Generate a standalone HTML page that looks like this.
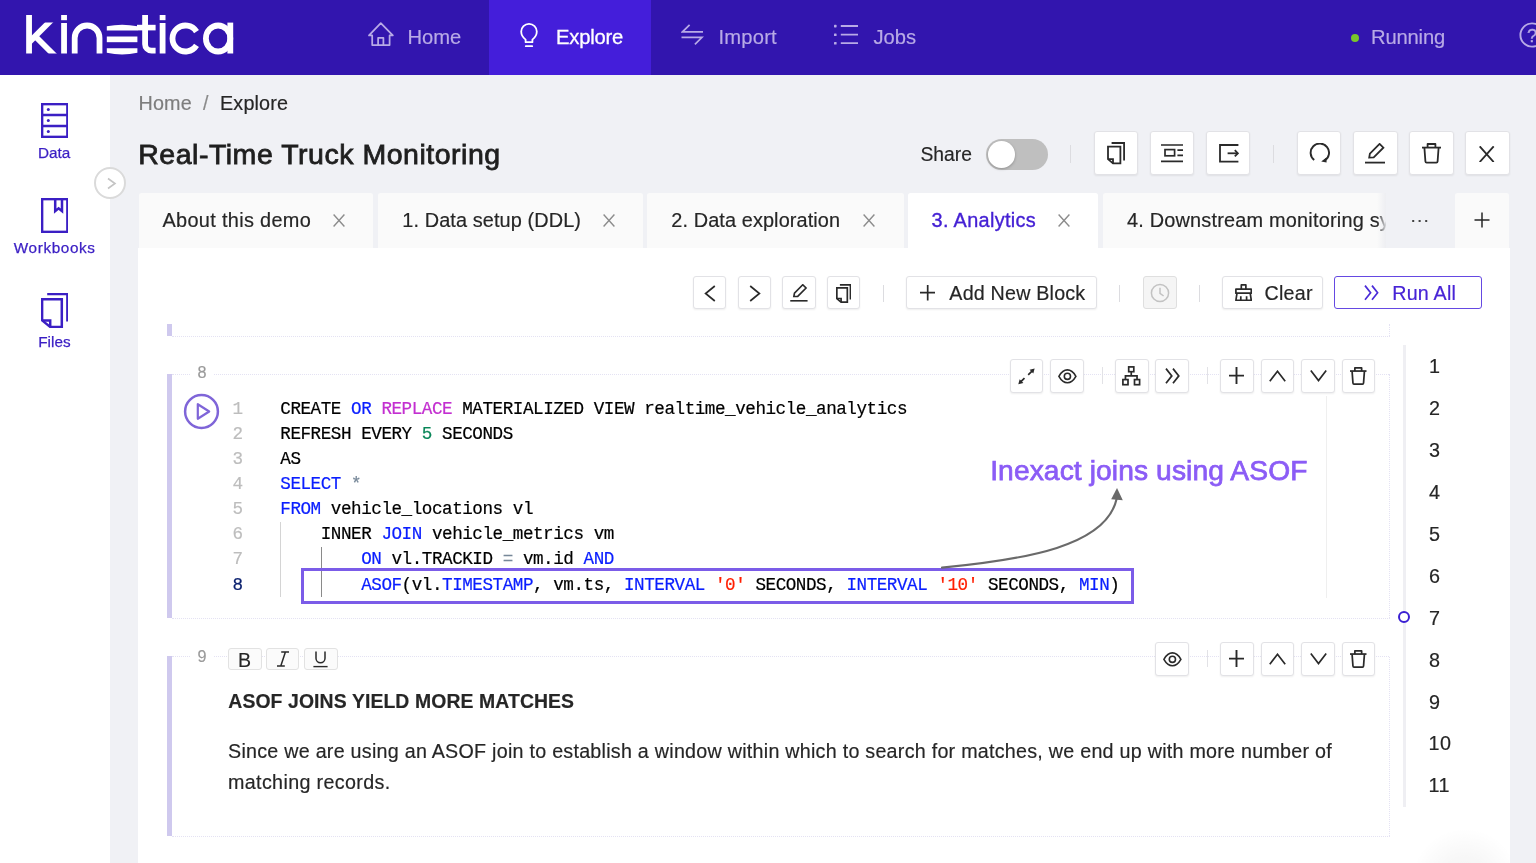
<!DOCTYPE html>
<html><head><meta charset="utf-8"><title>Kinetica Workbench</title>
<style>
*{box-sizing:border-box;margin:0;padding:0}
html,body{width:1536px;height:863px;overflow:hidden;background:#f0f1f5;font-family:"Liberation Sans",sans-serif;}
#root{position:absolute;left:0;top:0;width:1536px;height:863px;overflow:hidden;will-change:transform}
.b{position:absolute;display:block}
.t{position:absolute;white-space:nowrap;line-height:1;font-family:"Liberation Sans",sans-serif;-webkit-text-stroke:.18px}
.m{font-family:"Liberation Mono",monospace}
.btn{background:#fff;border:1px solid #e2e2e6;border-radius:3px;box-shadow:0 1px 2px rgba(0,0,0,.07)}
.code{position:absolute;left:280.3px;white-space:pre;font-family:"Liberation Mono",monospace;font-size:17.6px;letter-spacing:-0.450px;line-height:1;color:#000;-webkit-text-stroke:0.2px}
.ln{position:absolute;left:226px;width:17px;text-align:right;font-family:"Liberation Mono",monospace;font-size:17.6px;line-height:1;color:#bdbdbd;-webkit-text-stroke:0.2px}
.k{color:#0a1eff}.p{color:#c32fd0}.n{color:#098658}.s{color:#ff1e00}.o{color:#778899}

</style></head><body><div id="root">
<div class="b " style="left:138px;top:247.6px;width:1371.5px;height:616px;background:#fff"></div>
<div class="b " style="left:0px;top:0px;width:1536px;height:75px;background:#3215ae"></div>
<div class="b " style="left:489px;top:0px;width:162px;height:75px;background:#441eda"></div>
<svg class="b" style="left:0px;top:0px;" width="260" height="75" viewBox="0 0 260 75" fill="none">
<defs><clipPath id="kc"><rect x="30" y="22.6" width="40" height="30.9"/></clipPath></defs>
<g stroke="#fff" stroke-width="5.8" fill="none" stroke-linecap="butt" stroke-linejoin="miter">
<path d="M29.05 15V53.5"/>
<g clip-path="url(#kc)"><path d="M29 42.4L54 17.4"/><path d="M35.2 36.2L58 59.05"/></g>
<path d="M64.05 23V53.5"/>
<path d="M74.7 53.5V37.9a12.4 12.4 0 0 1 24.8 0V53.5"/>
<path d="M145.1 15V44.2a6.5 6.5 0 0 0 6.5 6.5H155.6"/>
<path d="M137 27.6H155.6" stroke-width="5.6"/>
<path d="M162.6 23V53.5"/>
<path d="M196.5 31.6A13 13 0 1 0 196.5 45.4"/>
<ellipse cx="218.1" cy="38.5" rx="12.2" ry="13"/>
<path d="M230.3 22.6V53.5"/>
</g>
<g fill="#fff">
<rect x="61.15" y="15" width="5.8" height="5.2"/>
<rect x="159.7" y="15" width="5.8" height="5.2"/>
<path d="M106.8 30.5V26.3Q122.1 23.3 137.4 26.3V30.5z"/>
<path d="M106.8 36.5H137.4V42.2H106.8z"/>
<path d="M106.8 48.2H137.4V52.8Q122.1 56 106.8 52.8z"/>
</g></svg>
<svg class="b" style="left:368px;top:22px;" width="26" height="25" viewBox="0 0 26 25" fill="none"><g stroke="#b8aae6" stroke-width="1.75" fill="none" stroke-linejoin="round" stroke-linecap="round"><path d="M4.2 13.4H1L12.8 1.1L24.8 13.4H21.6V23.1H4.2z"/><path d="M10.1 23V15.8H15.4V23"/></g></svg>
<div class="t " style="left:407.5px;top:27.40px;font-size:20.2px;color:#b8aae6;font-weight:400;">Home</div>
<svg class="b" style="left:520px;top:21.5px;" width="18" height="26" viewBox="0 0 18 26" fill="none"><g stroke="#fff" stroke-width="1.8" fill="none" stroke-linecap="round" stroke-linejoin="round"><path d="M5.6 17.6C3 15.6 1.2 13 1.2 9.6a7.8 7.8 0 0 1 15.6 0c0 3.4-1.8 6-4.4 8v2.6H5.6z"/><path d="M5.8 24.2H12.2"/></g></svg>
<div class="t " style="left:556px;top:27.40px;font-size:20.2px;color:#fff;font-weight:400;-webkit-text-stroke:0.3px #fff;letter-spacing:-.2px">Explore</div>
<svg class="b" style="left:681px;top:24px;" width="23" height="22" viewBox="0 0 23 22" fill="none"><g stroke="#b8aae6" stroke-width="1.7" fill="none" stroke-linecap="butt" stroke-linejoin="miter"><path d="M22 7.8H1.5L8.6 0.8"/><path d="M0.5 13.4H21L13.9 20.4"/></g></svg>
<div class="t " style="left:718.5px;top:27.40px;font-size:20.2px;color:#b8aae6;font-weight:400;letter-spacing:.2px">Import</div>
<svg class="b" style="left:834px;top:24px;" width="25" height="22" viewBox="0 0 25 22" fill="none"><g stroke="#b8aae6" stroke-width="1.8" fill="none"><path d="M6.8 2H24M6.8 10.6H24M6.8 19.2H24"/></g><g fill="#b8aae6"><rect x="0" y="0.8" width="2.6" height="2.6" rx=".6"/><rect x="0" y="9.4" width="2.6" height="2.6" rx=".6"/><rect x="0" y="18" width="2.6" height="2.6" rx=".6"/></g></svg>
<div class="t " style="left:873.5px;top:27.40px;font-size:20.2px;color:#b8aae6;font-weight:400;">Jobs</div>
<div class="b " style="left:1351px;top:33.5px;width:8px;height:8px;background:#79c52b;border-radius:50%"></div>
<div class="t " style="left:1371px;top:27.20px;font-size:20.2px;color:#b8aae6;font-weight:400;letter-spacing:-.17px">Running</div>
<svg class="b" style="left:1518px;top:20.5px;" width="28" height="28" viewBox="0 0 28 28" fill="none"><circle cx="14" cy="14" r="11.6" stroke="#b8aae6" stroke-width="1.9"/></svg>
<div class="t " style="left:1527px;top:26.50px;font-size:18.5px;color:#b8aae6;font-weight:400;-webkit-text-stroke:.3px">?</div>
<div class="b " style="left:0px;top:75px;width:110px;height:788px;background:#fff"></div>
<svg class="b" style="left:40.5px;top:103.3px;" width="27.5" height="35" viewBox="0 0 27.5 35" fill="none"><g stroke="#3b1fc4" stroke-width="2.5" fill="none"><rect x="1.1" y="1.1" width="25.3" height="32.8"/><path d="M1 12H26.5M1 23H26.5"/></g><g fill="#3b1fc4"><circle cx="7.3" cy="6.6" r="1.5"/><circle cx="7.3" cy="17.5" r="1.5"/><circle cx="7.3" cy="28.4" r="1.5"/></g></svg>
<div class="t " style="left:38px;top:145.40px;font-size:15.3px;color:#3b1fc4;font-weight:400;-webkit-text-stroke:0.25px;letter-spacing:.02px">Data</div>
<svg class="b" style="left:40.5px;top:198.3px;" width="27.5" height="35" viewBox="0 0 27.5 35" fill="none"><g stroke="#3b1fc4" stroke-width="2.5" fill="none" stroke-linejoin="miter"><rect x="1.1" y="1.1" width="25.3" height="32.8"/><path d="M14.2 1V13.2L17.6 10.4L21 13.2V1"/></g></svg>
<div class="t " style="left:13.8px;top:240.40px;font-size:15.3px;color:#3b1fc4;font-weight:400;-webkit-text-stroke:0.25px;letter-spacing:.62px">Workbooks</div>
<svg class="b" style="left:40.5px;top:293px;" width="27.5" height="35" viewBox="0 0 27.5 35" fill="none"><g stroke="#3b1fc4" stroke-width="2.5" fill="none" stroke-linejoin="miter"><path d="M6.2 1.1H26.4V28.6"/><path d="M1.1 6.3H20.8V33.9H9.2L1.1 27.4z"/><path d="M1.1 27.4H9.2V33.9"/></g></svg>
<div class="t " style="left:38.2px;top:334.30px;font-size:15.3px;color:#3b1fc4;font-weight:400;-webkit-text-stroke:0.25px;letter-spacing:.02px">Files</div>
<div class="b " style="left:94.1px;top:166.9px;width:31.9px;height:31.9px;background:#fff;border:2.2px solid #dadada;border-radius:50%"></div>
<svg class="b" style="left:105.5px;top:176.5px;" width="11" height="13" viewBox="0 0 11 13" fill="none"><path d="M2 1.5L9 6.5L2 11.5" stroke="#c4c4c4" stroke-width="1.6" fill="none"/></svg>
<div class="t " style="left:138.5px;top:94.00px;font-size:19.8px;color:#7d7d7d;font-weight:400;letter-spacing:.15px">Home</div>
<div class="t " style="left:203px;top:94.00px;font-size:19.6px;color:#8a8a8a;font-weight:400;">/</div>
<div class="t " style="left:220px;top:94.00px;font-size:19.8px;color:#262626;font-weight:400;letter-spacing:.15px">Explore</div>
<div class="t " style="left:138.2px;top:140.00px;font-size:28.5px;color:#1f1f1f;font-weight:400;-webkit-text-stroke:0.8px;letter-spacing:.52px">Real-Time Truck Monitoring</div>
<div class="t " style="left:920.5px;top:145.20px;font-size:19.3px;color:#262626;font-weight:400;">Share</div>
<div class="b " style="left:986px;top:139px;width:62px;height:31px;background:#bfbfbf;border-radius:16px"></div>
<div class="b " style="left:988.2px;top:141.2px;width:26.6px;height:26.6px;background:#fff;border-radius:50%;box-shadow:0 1px 3px rgba(0,0,0,.25)"></div>
<div class="b " style="left:1070.3px;top:145px;width:1.2px;height:18px;background:#dcdce0"></div>
<div class="b " style="left:1273px;top:145px;width:1.2px;height:18px;background:#dcdce0"></div>
<div class="b btn" style="left:1093.8px;top:131.2px;width:44.3px;height:44.3px;"></div>
<div class="b btn" style="left:1150px;top:131.2px;width:44.3px;height:44.3px;"></div>
<div class="b btn" style="left:1206px;top:131.2px;width:44.3px;height:44.3px;"></div>
<div class="b btn" style="left:1297.2px;top:131.2px;width:44.3px;height:44.3px;"></div>
<div class="b btn" style="left:1353.4px;top:131.2px;width:44.3px;height:44.3px;"></div>
<div class="b btn" style="left:1409.4px;top:131.2px;width:44.3px;height:44.3px;"></div>
<div class="b btn" style="left:1465.4px;top:131.2px;width:44.3px;height:44.3px;"></div>
<svg class="b" style="left:1107px;top:142.4px;" width="18.2" height="22.5" viewBox="0 0 18.2 22.5" fill="none"><g stroke="#2a2a2a" stroke-width="1.8" fill="none" stroke-linejoin="miter"><path d="M4.6 1H17.1V18.4"/><path d="M1 4.6H13.4V21.4H6L1 17.2z"/><path d="M1 17.2H6V21.4"/></g></svg>
<svg class="b" style="left:1160.6px;top:144.2px;" width="22.5" height="18.5" viewBox="0 0 22.5 18.5" fill="none"><g stroke="#2a2a2a" stroke-width="1.7" fill="none"><path d="M0 1H22.4M0 17.4H22.4M16.4 6.2H22.4M16.4 11.4H22.4"/><rect x="4" y="5.6" width="9.6" height="6.2"/></g></svg>
<svg class="b" style="left:1218.6px;top:144px;" width="20.5" height="18.8" viewBox="0 0 20.5 18.8" fill="none"><g stroke="#2a2a2a" stroke-width="1.8" fill="none" stroke-linejoin="miter"><path d="M19.4 1H1V17.6H19.4"/><path d="M8.6 9.3H18.6"/><path d="M15.8 6.2L18.9 9.3L15.8 12.4" /></g></svg>
<svg class="b" style="left:1309px;top:143.2px;" width="21" height="21" viewBox="0 0 21 21" fill="none"><g stroke="#2a2a2a" stroke-width="1.9" fill="none" stroke-linecap="butt"><path d="M5.2 17.0A9.2 9.2 0 1 1 15.6 17.6"/></g><path d="M12.2 18.6L17.4 14.4L17.6 19.4z" fill="#2a2a2a"/></svg>
<svg class="b" style="left:1365px;top:143px;" width="20.4" height="21" viewBox="0 0 20.4 21" fill="none"><g stroke="#2a2a2a" stroke-width="1.8" fill="none" stroke-linejoin="miter"><path d="M0 19.6H20.2"/><path d="M4.2 14.6L4.9 10.6L14.6 0.9L18.4 4.7L8.7 14.4z"/></g></svg>
<svg class="b" style="left:1421.7px;top:143.2px;" width="19" height="20.6" viewBox="0 0 19 20.6" fill="none"><g stroke="#2a2a2a" stroke-width="1.8" fill="none" stroke-linejoin="round"><path d="M0 4.6H19"/><path d="M5.6 4.4V1H13.4V4.4"/><path d="M2.4 4.8L3.4 18.4Q3.5 19.6 4.6 19.6H14.4Q15.5 19.6 15.6 18.4L16.6 4.8"/></g></svg>
<svg class="b" style="left:1479.4px;top:145.5px;" width="15.4" height="16.4" viewBox="0 0 15.4 16.4" fill="none"><path d="M0.7 0.3L14.7 16.1M14.7 0.3L0.7 16.1" stroke="#2a2a2a" stroke-width="1.8"/></svg>
<div class="b " style="left:138.5px;top:192.6px;width:234.5px;height:55px;background:#fafafa;border-radius:2.5px 2.5px 0 0"></div>
<div class="t " style="left:162.5px;top:211.20px;font-size:19.9px;color:#262626;font-weight:400;letter-spacing:0.32px">About this demo</div>
<svg class="b" style="left:332.5px;top:214.4px;" width="12" height="13" viewBox="0 0 12 13" fill="none"><path d="M0.6 0.5L11.4 12.5M11.4 0.5L0.6 12.5" stroke="#8c8c8c" stroke-width="1.4"/></svg>
<div class="b " style="left:377.5px;top:192.6px;width:265.5px;height:55px;background:#fafafa;border-radius:2.5px 2.5px 0 0"></div>
<div class="t " style="left:402.3px;top:211.20px;font-size:19.9px;color:#262626;font-weight:400;letter-spacing:0.1px">1. Data setup (DDL)</div>
<svg class="b" style="left:602.5px;top:214.4px;" width="12" height="13" viewBox="0 0 12 13" fill="none"><path d="M0.6 0.5L11.4 12.5M11.4 0.5L0.6 12.5" stroke="#8c8c8c" stroke-width="1.4"/></svg>
<div class="b " style="left:647.3px;top:192.6px;width:256.5px;height:55px;background:#fafafa;border-radius:2.5px 2.5px 0 0"></div>
<div class="t " style="left:671.3px;top:211.20px;font-size:19.9px;color:#262626;font-weight:400;letter-spacing:0.1px">2. Data exploration</div>
<svg class="b" style="left:863.4px;top:214.4px;" width="12" height="13" viewBox="0 0 12 13" fill="none"><path d="M0.6 0.5L11.4 12.5M11.4 0.5L0.6 12.5" stroke="#8c8c8c" stroke-width="1.4"/></svg>
<div class="b " style="left:908.2px;top:192.6px;width:190.3px;height:55px;background:#fff;border-radius:2.5px 2.5px 0 0"></div>
<div class="t " style="left:931.6px;top:211.20px;font-size:19.9px;color:#4420d4;font-weight:400;-webkit-text-stroke:0.35px;letter-spacing:0.32px">3. Analytics</div>
<svg class="b" style="left:1058px;top:214.4px;" width="12" height="13" viewBox="0 0 12 13" fill="none"><path d="M0.6 0.5L11.4 12.5M11.4 0.5L0.6 12.5" stroke="#8c8c8c" stroke-width="1.4"/></svg>
<div class="b " style="left:1102.8px;top:192.6px;width:283.2px;height:55px;background:#fafafa;border-radius:2.5px 0 0 0;overflow:hidden"><div class="t" style="left:24.2px;top:18.40px;font-size:19.9px;color:#262626;letter-spacing:.2px">4. Downstream monitoring system</div><div class="b" style="right:0;top:0;width:9px;height:55px;background:linear-gradient(90deg,rgba(240,241,245,0),rgba(236,237,241,.9))"></div></div>
<div class="t " style="left:1410px;top:210.00px;font-size:19px;color:#444;font-weight:400;letter-spacing:.2px">&#183;&#183;&#183;</div>
<div class="b " style="left:1454.6px;top:192.6px;width:54.9px;height:55px;background:#fafafa;border-radius:2.5px 2.5px 0 0"></div>
<svg class="b" style="left:1473.5px;top:212px;" width="16" height="16" viewBox="0 0 16 16" fill="none"><path d="M8 0.5V15.5M0.5 8H15.5" stroke="#262626" stroke-width="1.5"/></svg>
<div class="b btn" style="left:693.2px;top:276.3px;width:33.2px;height:33.2px;"></div>
<div class="b btn" style="left:737.7px;top:276.3px;width:33.2px;height:33.2px;"></div>
<div class="b btn" style="left:782.4px;top:276.3px;width:33.2px;height:33.2px;"></div>
<div class="b btn" style="left:827.2px;top:276.3px;width:33.2px;height:33.2px;"></div>
<svg class="b" style="left:703.5px;top:284.5px;" width="12" height="17" viewBox="0 0 12 17" fill="none"><path d="M10.8 1L1.6 8.5L10.8 16" stroke="#2a2a2a" stroke-width="1.7" fill="none"/></svg>
<svg class="b" style="left:748.5px;top:284.5px;" width="12" height="17" viewBox="0 0 12 17" fill="none"><path d="M1.2 1L10.4 8.5L1.2 16" stroke="#2a2a2a" stroke-width="1.7" fill="none"/></svg>
<svg class="b" style="left:790px;top:284.4px;" width="18" height="18" viewBox="0 0 20.4 21" fill="none"><g stroke="#2a2a2a" stroke-width="1.9" fill="none" stroke-linejoin="miter"><path d="M0 19.6H20.2"/><path d="M4.2 14.6L4.9 10.6L14.6 0.9L18.4 4.7L8.7 14.4z"/></g></svg>
<svg class="b" style="left:835.9px;top:283.6px;" width="15.4" height="19" viewBox="0 0 18.2 22.5" fill="none"><g stroke="#2a2a2a" stroke-width="2.0" fill="none" stroke-linejoin="miter"><path d="M4.6 1H17.1V18.4"/><path d="M1 4.6H13.4V21.4H6L1 17.2z"/><path d="M1 17.2H6V21.4"/></g></svg>
<div class="b " style="left:883.3px;top:285px;width:1.2px;height:17px;background:#dcdce0"></div>
<div class="b " style="left:1119px;top:285px;width:1.2px;height:17px;background:#dcdce0"></div>
<div class="b " style="left:1199.2px;top:285px;width:1.2px;height:17px;background:#dcdce0"></div>
<div class="b btn" style="left:906.3px;top:276.3px;width:190.3px;height:33.2px;"></div>
<svg class="b" style="left:920px;top:285.2px;" width="15.4" height="15.4" viewBox="0 0 15.4 15.4" fill="none"><path d="M7.7 0V15.4M0 7.7H15.4" stroke="#2a2a2a" stroke-width="1.7"/></svg>
<div class="t " style="left:949.3px;top:284.00px;font-size:19.7px;color:#262626;font-weight:400;letter-spacing:.2px">Add New Block</div>
<div class="b " style="left:1142.8px;top:276.3px;width:34px;height:33.2px;background:#f5f5f5;border:1px solid #dfdfdf;border-radius:3px"></div>
<svg class="b" style="left:1150px;top:283px;" width="20" height="20" viewBox="0 0 20 20" fill="none"><circle cx="10" cy="10" r="8.6" stroke="#c2c2c2" stroke-width="1.5"/><path d="M10 4.8V10.4L13.6 13" stroke="#c2c2c2" stroke-width="1.5" fill="none"/></svg>
<div class="b btn" style="left:1222.3px;top:276.3px;width:100.6px;height:33.2px;"></div>
<svg class="b" style="left:1234.9px;top:283.9px;" width="17.2" height="17.2" viewBox="0 0 17.2 17.2" fill="none"><g stroke="#2a2a2a" stroke-width="1.7" fill="none" stroke-linejoin="round"><path d="M6.3 5.2V0.9H10.9V5.2"/><rect x="0.9" y="5.2" width="15.4" height="4"/><path d="M2 9.2L0.9 16.3H16.3L15.2 9.2"/><path d="M5.8 16.3V12.3M11.6 16.3V12.3"/></g></svg>
<div class="t " style="left:1264.6px;top:284.00px;font-size:19.7px;color:#262626;font-weight:400;letter-spacing:.2px">Clear</div>
<div class="b " style="left:1334px;top:276.3px;width:147.8px;height:33.2px;background:#fff;border:1.6px solid #6549e2;border-radius:3px"></div>
<svg class="b" style="left:1364.4px;top:285.2px;" width="15" height="15.4" viewBox="0 0 15 15.4" fill="none"><path d="M1 0.6L6.6 7.7L1 14.8M8 0.6L13.6 7.7L8 14.8" stroke="#4a2bd8" stroke-width="1.7" fill="none"/></svg>
<div class="t " style="left:1392.3px;top:284.00px;font-size:19.7px;color:#4724d6;font-weight:400;letter-spacing:.2px;-webkit-text-stroke:.2px">Run All</div>
<div class="b " style="left:166.5px;top:324px;width:5.7px;height:12px;background:#cfc9ee"></div>
<div class="b " style="left:172px;top:335.6px;width:1217.5px;height:1px;border-top:1px dotted #e4e2f3"></div>
<div class="b " style="left:1389px;top:324px;width:1px;height:12px;border-left:1px dotted #e4e2f3"></div>
<div class="b " style="left:166.5px;top:373.8px;width:5.7px;height:244px;background:#cfc9ee"></div>
<div class="b " style="left:172px;top:373.6px;width:18px;height:1px;border-top:1px dotted #e4e2f3"></div>
<div class="b " style="left:214px;top:373.6px;width:1175px;height:1px;border-top:1px dotted #e4e2f3"></div>
<div class="b " style="left:1389px;top:374px;width:1px;height:244px;border-left:1px dotted #e4e2f3"></div>
<div class="b " style="left:172px;top:617.5px;width:1217.5px;height:1px;border-top:1px dotted #e4e2f3"></div>
<div class="t " style="left:197.6px;top:364.30px;font-size:16.2px;color:#9a9a9a;font-weight:400;">8</div>
<div class="b " style="left:1326px;top:396px;width:1px;height:202px;background:#efefef"></div>
<svg class="b" style="left:183.1px;top:392.6px;" width="37" height="37" viewBox="0 0 37 37" fill="none"><circle cx="18.5" cy="18.5" r="16.4" stroke="#7f65d8" stroke-width="2.5" fill="#fff"/><path d="M14.8 11.2V25.8L26.2 18.5z" stroke="#7f65d8" stroke-width="2.2" fill="none" stroke-linejoin="round"/></svg>
<div class="b btn" style="left:1009.5px;top:359.29999999999995px;width:33.6px;height:33.5px;"></div>
<div class="b btn" style="left:1050.2px;top:359.29999999999995px;width:33.6px;height:33.5px;"></div>
<div class="b btn" style="left:1115.2px;top:359.29999999999995px;width:33.6px;height:33.5px;"></div>
<div class="b btn" style="left:1155.3999999999999px;top:359.29999999999995px;width:33.6px;height:33.5px;"></div>
<div class="b btn" style="left:1220.1px;top:359.29999999999995px;width:33.6px;height:33.5px;"></div>
<div class="b btn" style="left:1260.8px;top:359.29999999999995px;width:33.6px;height:33.5px;"></div>
<div class="b btn" style="left:1301.0px;top:359.29999999999995px;width:33.6px;height:33.5px;"></div>
<div class="b btn" style="left:1341.6px;top:359.29999999999995px;width:33.6px;height:33.5px;"></div>
<div class="b " style="left:1207.2px;top:366.9px;width:1.2px;height:17px;background:#e2e2e6"></div>
<div class="b " style="left:1101.8px;top:366.9px;width:1.2px;height:17px;background:#e2e2e6"></div>
<svg class="b" style="left:1018.3px;top:368.0px;" width="17" height="17" viewBox="0 0 17 17" fill="none"><path d="M10.2 6.8L14.5 2.6M6.5 10.1L2.4 14.2" stroke="#2a2a2a" stroke-width="1.7"/><path d="M16.65 0.4L11.6 1.7L15.3 5.4z M0.3 16.3L5.4 15L1.65 11.3z" fill="#2a2a2a"/></svg>
<svg class="b" style="left:1122.4px;top:366.3px;" width="18.5" height="19.6" viewBox="0 0 18.5 19.6" fill="none"><g stroke="#2a2a2a" stroke-width="1.7" fill="none"><rect x="6.7" y="0.9" width="5.1" height="4.8"/><rect x="0.9" y="13.6" width="5.1" height="5.1"/><rect x="12.5" y="13.6" width="5.1" height="5.1"/><path d="M9.25 5.7V9.8M3.45 13.6V9.8H15.05V13.6"/></g></svg>
<svg class="b" style="left:1165px;top:368.1px;" width="15" height="15.8" viewBox="0 0 15 15.8" fill="none"><path d="M1 0.6L6.8 7.9L1 15.2M8 0.6L13.8 7.9L8 15.2" stroke="#2a2a2a" stroke-width="1.7" fill="none"/></svg>
<svg class="b" style="left:1057.8000000000002px;top:369.0px;" width="18.8" height="14.6" viewBox="0 0 18.8 14.6" fill="none"><g stroke="#2a2a2a" stroke-width="1.6" fill="none"><path d="M0.9 7.3C3.4 2.9 6.2 0.9 9.4 0.9S15.4 2.9 17.9 7.3C15.4 11.7 12.6 13.7 9.4 13.7S3.4 11.7 0.9 7.3z"/><circle cx="9.4" cy="7.3" r="3.1"/></g></svg>
<svg class="b" style="left:1229.3px;top:367.1px;" width="15" height="17.2" viewBox="0 0 15 17.2" fill="none"><path d="M7.5 0V17.2M0 8.6H15" stroke="#2a2a2a" stroke-width="1.9"/></svg>
<svg class="b" style="left:1268.8px;top:370.1px;" width="17" height="11.8" viewBox="0 0 17 11.8" fill="none"><path d="M0.8 11.2L8.5 1.3L16.2 11.2" stroke="#2a2a2a" stroke-width="1.7" fill="none"/></svg>
<svg class="b" style="left:1309.8px;top:369.9px;" width="17" height="11.8" viewBox="0 0 17 11.8" fill="none"><path d="M0.8 0.6L8.5 10.5L16.2 0.6" stroke="#2a2a2a" stroke-width="1.7" fill="none"/></svg>
<svg class="b" style="left:1350.3px;top:366.7px;" width="16.5" height="18" viewBox="0 0 19 20.6" fill="none"><g stroke="#2a2a2a" stroke-width="2.0" fill="none" stroke-linejoin="round"><path d="M0 4.6H19"/><path d="M5.6 4.4V1H13.4V4.4"/><path d="M2.4 4.8L3.4 18.4Q3.5 19.6 4.6 19.6H14.4Q15.5 19.6 15.6 18.4L16.6 4.8"/></g></svg>
<div class="code" style="top:400.60px">CREATE <span class="k">OR</span> <span class="p">REPLACE</span> MATERIALIZED VIEW realtime_vehicle_analytics</div>
<div class="ln" style="top:400.60px;">1</div>
<div class="code" style="top:425.73px">REFRESH EVERY <span class="n">5</span> SECONDS</div>
<div class="ln" style="top:425.73px;">2</div>
<div class="code" style="top:450.86px">AS</div>
<div class="ln" style="top:450.86px;">3</div>
<div class="code" style="top:475.99px"><span class="k">SELECT</span> <span class="o">*</span></div>
<div class="ln" style="top:475.99px;">4</div>
<div class="code" style="top:501.12px"><span class="k">FROM</span> vehicle_locations vl</div>
<div class="ln" style="top:501.12px;">5</div>
<div class="code" style="top:526.25px">    INNER <span class="k">JOIN</span> vehicle_metrics vm</div>
<div class="ln" style="top:526.25px;">6</div>
<div class="code" style="top:551.38px">        <span class="k">ON</span> vl.TRACKID <span class="o">=</span> vm.id <span class="k">AND</span></div>
<div class="ln" style="top:551.38px;">7</div>
<div class="code" style="top:576.51px">        <span class="k">ASOF</span>(vl.<span class="k">TIMESTAMP</span>, vm.ts, <span class="k">INTERVAL</span> <span class="s">'0'</span> SECONDS, <span class="k">INTERVAL</span> <span class="s">'10'</span> SECONDS, <span class="k">MIN</span>)</div>
<div class="ln" style="top:576.51px;color:#0b216f;">8</div>
<div class="b " style="left:280.4px;top:521.5px;width:1px;height:75.5px;background:#d4d4d4"></div>
<div class="b " style="left:321.1px;top:546.8px;width:1px;height:50.2px;background:#8a8a8a"></div>
<div class="b " style="left:300.8px;top:568.1px;width:832.8px;height:36.3px;border:3.1px solid #7b5ce8"></div>
<div class="t " style="left:990.2px;top:455.80px;font-size:28.2px;color:#8b5cf6;font-weight:400;-webkit-text-stroke:0.75px #8b5cf6;letter-spacing:.1px">Inexact joins using ASOF</div>
<svg class="b" style="left:930px;top:480px;" width="210" height="95" viewBox="0 0 210 95" fill="none"><path d="M12 87.6C96 79.5 176 66 186.6 19" stroke="#6a6a6a" stroke-width="2.1" fill="none" stroke-linecap="round"/><path d="M187 8L192.8 20.2L181.2 19.2z" fill="#6a6a6a"/></svg>
<div class="b " style="left:1403.1px;top:344.6px;width:2.9px;height:462px;background:#efeff3"></div>
<div class="t " style="left:1429.0px;top:356.90px;font-size:19.8px;color:#262626;font-weight:400;letter-spacing:.3px">1</div>
<div class="t " style="left:1429.0px;top:398.85px;font-size:19.8px;color:#262626;font-weight:400;letter-spacing:.3px">2</div>
<div class="t " style="left:1429.0px;top:440.80px;font-size:19.8px;color:#262626;font-weight:400;letter-spacing:.3px">3</div>
<div class="t " style="left:1429.0px;top:482.75px;font-size:19.8px;color:#262626;font-weight:400;letter-spacing:.3px">4</div>
<div class="t " style="left:1429.0px;top:524.70px;font-size:19.8px;color:#262626;font-weight:400;letter-spacing:.3px">5</div>
<div class="t " style="left:1429.0px;top:566.65px;font-size:19.8px;color:#262626;font-weight:400;letter-spacing:.3px">6</div>
<div class="t " style="left:1429.0px;top:608.60px;font-size:19.8px;color:#262626;font-weight:400;letter-spacing:.3px">7</div>
<div class="t " style="left:1429.0px;top:650.55px;font-size:19.8px;color:#262626;font-weight:400;letter-spacing:.3px">8</div>
<div class="t " style="left:1429.0px;top:692.50px;font-size:19.8px;color:#262626;font-weight:400;letter-spacing:.3px">9</div>
<div class="t " style="left:1428.6px;top:734.45px;font-size:19.8px;color:#262626;font-weight:400;letter-spacing:.3px">10</div>
<div class="t " style="left:1428.6px;top:776.40px;font-size:19.8px;color:#262626;font-weight:400;letter-spacing:.3px">11</div>
<div class="b " style="left:1398.2px;top:611.1px;width:12.3px;height:12.3px;background:#fff;border:2.7px solid #3a1fd2;border-radius:50%"></div>
<div class="b " style="left:166.5px;top:656px;width:5.7px;height:180px;background:#cfc9ee"></div>
<div class="b " style="left:172px;top:656.4px;width:18px;height:1px;border-top:1px dotted #e4e2f3"></div>
<div class="b " style="left:214px;top:656.4px;width:1175px;height:1px;border-top:1px dotted #e4e2f3"></div>
<div class="b " style="left:1389px;top:657px;width:1px;height:179px;border-left:1px dotted #e4e2f3"></div>
<div class="b " style="left:172px;top:835.5px;width:1217.5px;height:1px;border-top:1px dotted #e4e2f3"></div>
<div class="t " style="left:197.6px;top:647.60px;font-size:16.2px;color:#9a9a9a;font-weight:400;">9</div>
<div class="b " style="left:228.3px;top:648.3px;width:33.3px;height:21.4px;background:#fbfbfb;border:1px solid #e2e2e2;border-radius:3px"></div>
<div class="b " style="left:265.6px;top:648.3px;width:33.3px;height:21.4px;background:#fbfbfb;border:1px solid #e2e2e2;border-radius:3px"></div>
<div class="b " style="left:304.2px;top:648.3px;width:33.4px;height:21.4px;background:#fbfbfb;border:1px solid #e2e2e2;border-radius:3px"></div>
<div class="t " style="left:238px;top:650.60px;font-size:19.6px;color:#262626;font-weight:400;-webkit-text-stroke:.15px">B</div>
<svg class="b" style="left:275.6px;top:651.2px;" width="14" height="16" viewBox="0 0 14 16" fill="none"><path d="M5.2 1H13M1 15H8.8M9.4 1L4.8 15" stroke="#2a2a2a" stroke-width="1.5" fill="none"/></svg>
<svg class="b" style="left:313.2px;top:651px;" width="15" height="17" viewBox="0 0 15 17" fill="none"><path d="M3 0.4V7.2a4.5 4.5 0 0 0 9 0V0.4" stroke="#2a2a2a" stroke-width="1.5" fill="none"/><path d="M0.4 15.6H14.6" stroke="#2a2a2a" stroke-width="1.4"/></svg>
<div class="b btn" style="left:1155.3999999999999px;top:642.3px;width:33.6px;height:33.5px;"></div>
<div class="b btn" style="left:1220.1px;top:642.3px;width:33.6px;height:33.5px;"></div>
<div class="b btn" style="left:1260.8px;top:642.3px;width:33.6px;height:33.5px;"></div>
<div class="b btn" style="left:1301.0px;top:642.3px;width:33.6px;height:33.5px;"></div>
<div class="b btn" style="left:1341.6px;top:642.3px;width:33.6px;height:33.5px;"></div>
<div class="b " style="left:1207.2px;top:649.9px;width:1.2px;height:17px;background:#e2e2e6"></div>
<svg class="b" style="left:1163.0px;top:652.0px;" width="18.8" height="14.6" viewBox="0 0 18.8 14.6" fill="none"><g stroke="#2a2a2a" stroke-width="1.6" fill="none"><path d="M0.9 7.3C3.4 2.9 6.2 0.9 9.4 0.9S15.4 2.9 17.9 7.3C15.4 11.7 12.6 13.7 9.4 13.7S3.4 11.7 0.9 7.3z"/><circle cx="9.4" cy="7.3" r="3.1"/></g></svg>
<svg class="b" style="left:1229.3px;top:650.1px;" width="15" height="17.2" viewBox="0 0 15 17.2" fill="none"><path d="M7.5 0V17.2M0 8.6H15" stroke="#2a2a2a" stroke-width="1.9"/></svg>
<svg class="b" style="left:1268.8px;top:653.1px;" width="17" height="11.8" viewBox="0 0 17 11.8" fill="none"><path d="M0.8 11.2L8.5 1.3L16.2 11.2" stroke="#2a2a2a" stroke-width="1.7" fill="none"/></svg>
<svg class="b" style="left:1309.8px;top:652.9px;" width="17" height="11.8" viewBox="0 0 17 11.8" fill="none"><path d="M0.8 0.6L8.5 10.5L16.2 0.6" stroke="#2a2a2a" stroke-width="1.7" fill="none"/></svg>
<svg class="b" style="left:1350.3px;top:649.7px;" width="16.5" height="18" viewBox="0 0 19 20.6" fill="none"><g stroke="#2a2a2a" stroke-width="2.0" fill="none" stroke-linejoin="round"><path d="M0 4.6H19"/><path d="M5.6 4.4V1H13.4V4.4"/><path d="M2.4 4.8L3.4 18.4Q3.5 19.6 4.6 19.6H14.4Q15.5 19.6 15.6 18.4L16.6 4.8"/></g></svg>
<div class="t " style="left:228.3px;top:691.60px;font-size:19.4px;color:#262626;font-weight:700;letter-spacing:.1px">ASOF JOINS YIELD MORE MATCHES</div>
<div class="t " style="left:228px;top:742.00px;font-size:19.7px;color:#262626;font-weight:400;letter-spacing:.256px">Since we are using an ASOF join to establish a window within which to search for matches, we end up with more number of</div>
<div class="t " style="left:228px;top:773.00px;font-size:19.7px;color:#262626;font-weight:400;letter-spacing:.36px">matching records.</div>
<div class="b " style="left:1390px;top:830px;width:119.5px;height:33px;background:radial-gradient(circle at 75px 52px, rgba(0,0,0,.045) 0, rgba(0,0,0,.03) 25px, rgba(0,0,0,0) 54px)"></div>
</div></body></html>
